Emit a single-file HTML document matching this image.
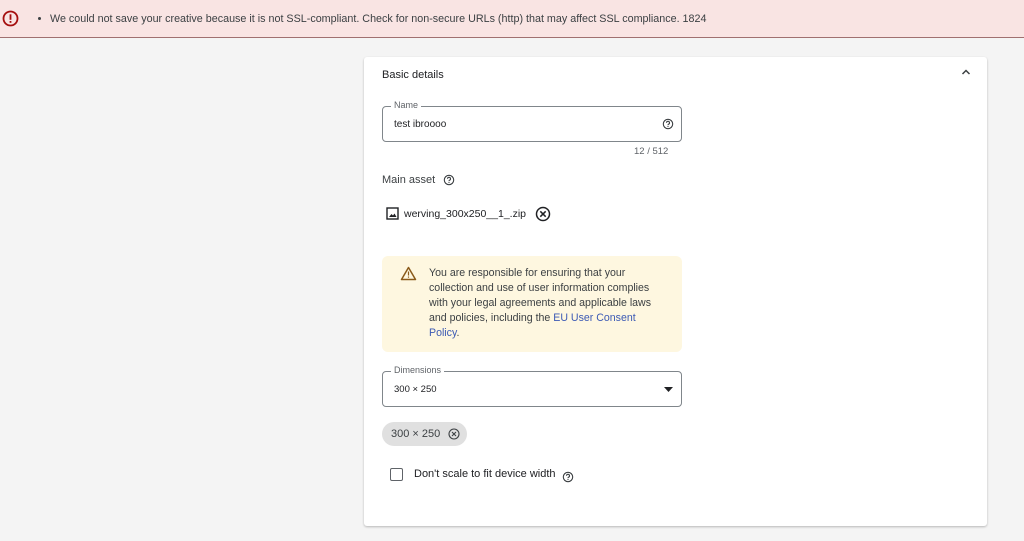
<!DOCTYPE html>
<html><head><style>
*{box-sizing:border-box;margin:0;padding:0}
body{width:1024px;height:541px;background:#f4f4f4;font-family:"Liberation Sans",Arial,sans-serif;color:#3c4043;position:relative;overflow:hidden;font-size:11px}
.banner{position:absolute;left:0;top:0;width:1024px;height:38px;background:#f9e4e3;border-bottom:1px solid #a07070}
.banner .t{position:absolute;left:50px;top:13px;font-size:10.75px;color:#3c4043}
.card{position:absolute;left:364px;top:57px;width:623px;height:469px;background:#fff;border-radius:3px;box-shadow:0 1px 2px rgba(0,0,0,.25)}
.a{position:absolute}
.field{position:absolute;border:1px solid #80868b;border-radius:4px;background:#fff}
.lbl{position:absolute;top:-7px;left:8px;background:#fff;padding:0 3px;font-size:9px;color:#5f6368}
</style></head><body>
<div class="banner">
<svg class="a" style="left:2px;top:10px" width="17" height="17" viewBox="0 0 17 17"><circle cx="8.5" cy="8.5" r="7" fill="none" stroke="#a50e0e" stroke-width="1.8"/><rect x="7.6" y="4.3" width="1.8" height="5.5" fill="#a50e0e"/><rect x="7.6" y="11" width="1.8" height="1.8" fill="#a50e0e"/></svg>
<div class="a" style="left:38px;top:17px;width:3px;height:3px;border-radius:50%;background:#3c4043"></div>
<div class="t">We could not save your creative because it is not SSL-compliant. Check for non-secure URLs (http) that may affect SSL compliance. 1824</div>
</div>
<div class="card">
<div class="a" style="left:18px;top:12px;font-size:11px;color:#202124">Basic details</div>
<svg class="a" style="left:597px;top:11px" width="10" height="8" viewBox="0 0 10 8"><path d="M1.5 6 L5 2.5 L8.5 6" fill="none" stroke="#3c4043" stroke-width="1.5"/></svg>
<div class="field" style="left:18px;top:49px;width:300px;height:36px"><div class="lbl">Name</div>
<div class="a" style="left:11px;top:12px;font-size:10px;color:#202124">test ibroooo</div>
<svg class="a" style="left:279px;top:11px" width="12" height="12" viewBox="0 0 12 12"><circle cx="6" cy="6" r="4.7" fill="none" stroke="#3c4043" stroke-width="1.1"/><path d="M4.5 4.8a1.5 1.5 0 1 1 2 1.4c-.4.2-.5.5-.5.9" fill="none" stroke="#3c4043" stroke-width="1.1"/><circle cx="6" cy="8.5" r=".6" fill="#3c4043"/></svg>
</div>
<div class="a" style="left:270px;top:89px;font-size:9.5px;color:#5f6368">12 / 512</div>
<div class="a" style="left:18px;top:117px;font-size:11px">Main asset</div>
<svg class="a" style="left:79px;top:117px" width="12" height="12" viewBox="0 0 12 12"><circle cx="6" cy="6" r="4.7" fill="none" stroke="#3c4043" stroke-width="1.1"/><path d="M4.5 4.8a1.5 1.5 0 1 1 2 1.4c-.4.2-.5.5-.5.9" fill="none" stroke="#3c4043" stroke-width="1.1"/><circle cx="6" cy="8.5" r=".6" fill="#3c4043"/></svg>
<svg class="a" style="left:22px;top:150px" width="13" height="13" viewBox="0 0 13 13"><rect x="1" y="1" width="11" height="11" fill="none" stroke="#202124" stroke-width="1.4"/><path d="M3 10 L5.5 7 L7 8.5 L8.5 6.5 L10.5 10Z" fill="#202124"/></svg>
<div class="a" style="left:40px;top:151px;font-size:10.5px;color:#202124">werving_300x250__1_.zip</div>
<svg class="a" style="left:171px;top:149px" width="16" height="16" viewBox="0 0 16 16"><circle cx="8" cy="8" r="6.5" fill="none" stroke="#202124" stroke-width="1.5"/><path d="M5.3 5.3 L10.7 10.7 M10.7 5.3 L5.3 10.7" stroke="#202124" stroke-width="1.5"/></svg>
<div class="a" style="left:18px;top:199px;width:300px;height:96px;background:#fef7e0;border-radius:6px"></div>
<svg class="a" style="left:36px;top:209px" width="17" height="15" viewBox="0 0 17 15"><path d="M8.5 1.5 L15.5 13.5 H1.5Z" fill="none" stroke="#8a5a1a" stroke-width="1.5" stroke-linejoin="round"/><rect x="7.9" y="5.5" width="1.2" height="4" fill="#8a5a1a"/><rect x="7.9" y="10.5" width="1.2" height="1.2" fill="#8a5a1a"/></svg>
<div class="a" style="left:65px;top:209px;width:234px;font-size:10.6px;line-height:15px;color:#3c4043">You are responsible for ensuring that your collection and use of user information complies with your legal agreements and applicable laws and policies, including the <span style="color:#3c5ab4">EU User Consent Policy</span>.</div>
<div class="field" style="left:18px;top:314px;width:300px;height:36px"><div class="lbl">Dimensions</div>
<div class="a" style="left:11px;top:12px;font-size:9.5px;color:#202124">300 × 250</div>
<svg class="a" style="left:281px;top:15px" width="9" height="5" viewBox="0 0 9 5"><path d="M0 0 H9 L4.5 5Z" fill="#202124"/></svg>
</div>
<div class="a" style="left:18px;top:365px;width:85px;height:24px;border-radius:12px;background:#e0e0e0"></div>
<div class="a" style="left:27px;top:371px;font-size:11px;color:#3c4043">300 × 250</div>
<svg class="a" style="left:84px;top:371px" width="12" height="12" viewBox="0 0 12 12"><circle cx="6" cy="6" r="5" fill="none" stroke="#3c4043" stroke-width="1.1"/><path d="M4 4 L8 8 M8 4 L4 8" stroke="#3c4043" stroke-width="1.1"/></svg>
<div class="a" style="left:26px;top:411px;width:13px;height:13px;border:1.6px solid #5f6368;border-radius:2px"></div>
<div class="a" style="left:50px;top:411px;font-size:11px;color:#202124">Don't scale to fit device width</div>
<svg class="a" style="left:198px;top:414px" width="12" height="12" viewBox="0 0 12 12"><circle cx="6" cy="6" r="4.7" fill="none" stroke="#3c4043" stroke-width="1.1"/><path d="M4.5 4.8a1.5 1.5 0 1 1 2 1.4c-.4.2-.5.5-.5.9" fill="none" stroke="#3c4043" stroke-width="1.1"/><circle cx="6" cy="8.5" r=".6" fill="#3c4043"/></svg>
</div>
</body></html>
